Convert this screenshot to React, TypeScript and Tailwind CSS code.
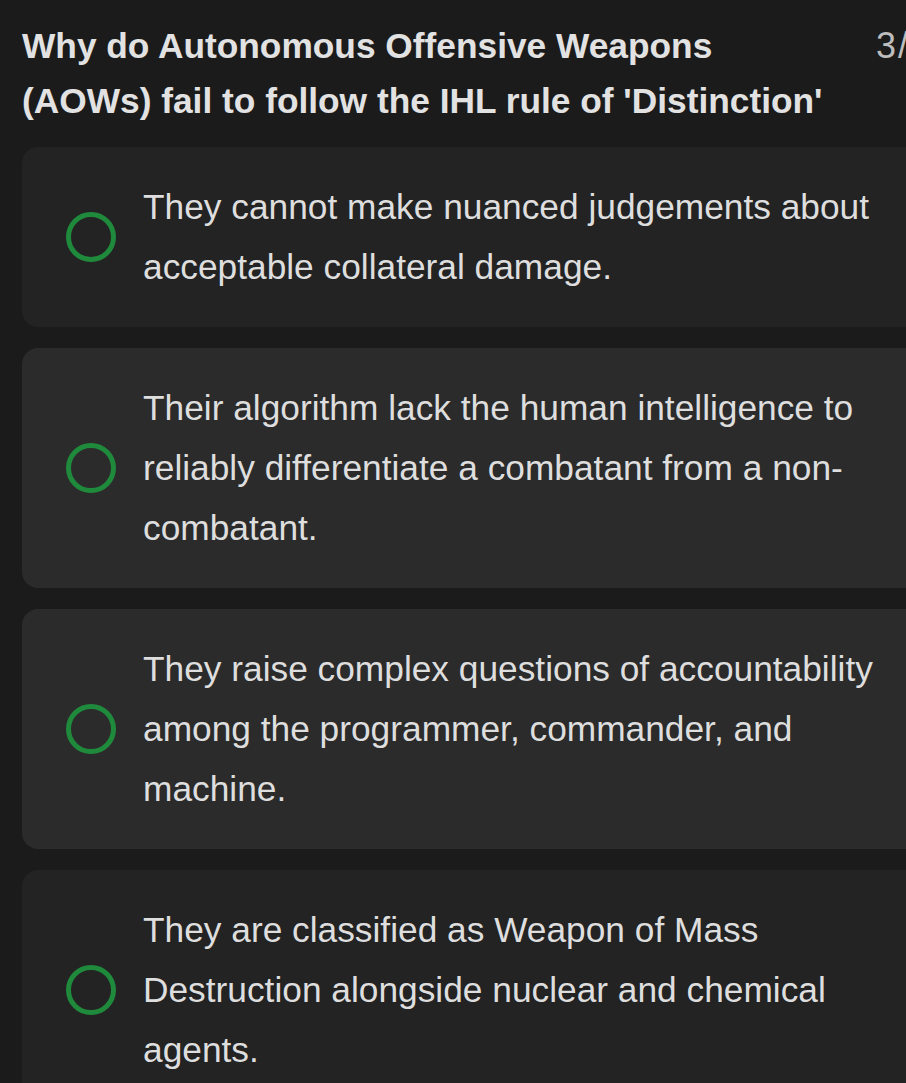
const options = [
  { text: 'They cannot make nuanced judgements about acceptable collateral damage.', tone: 'bg-[#232323]' },
  { text: 'Their algorithm lack the human intelligence to reliably differentiate a combatant from a non-combatant.', tone: 'bg-[#2b2b2b]' },
  { text: 'They raise complex questions of accountability among the programmer, commander, and machine.', tone: 'bg-[#2b2b2b]' },
  { text: 'They are classified as Weapon of Mass Destruction alongside nuclear and chemical agents.', tone: 'bg-[#232323]' },
];

function Radio() {
  return <span className="block w-[50px] h-[50px] shrink-0 rounded-full border-[5px] border-[#1f8a3c]" />;
}

export default function App() {
  return (
    <div className="w-[906px] h-[1083px] overflow-hidden bg-[#1b1b1b] font-['Liberation_Sans',Arial,sans-serif]">
      <div className="w-[960px] pl-[22px] pt-[18px]">
        <div className="flex items-start justify-between pr-[20px]">
          <h1 className="w-[820px] text-[35.3px] leading-[55px] font-bold text-[#e2e2e2]">
            Why do Autonomous Offensive Weapons (AOWs) fail to follow the IHL rule of 'Distinction'
          </h1>
          <span className="text-[36px] leading-[55px] tracking-[2px] text-[#bdbdbd] pr-[8px]">3/4</span>
        </div>

        <div className="mt-[19px] flex flex-col gap-[21px]">
          {options.map((o, i) => (
            <div key={i} className={`${o.tone} rounded-[16px] flex items-center pl-[44px] py-[30px]`}>
              <Radio />
              <p className="ml-[27px] w-[760px] text-[35.3px] leading-[60px] text-[#dedede]">{o.text}</p>
            </div>
          ))}
        </div>
      </div>
    </div>
  );
}
